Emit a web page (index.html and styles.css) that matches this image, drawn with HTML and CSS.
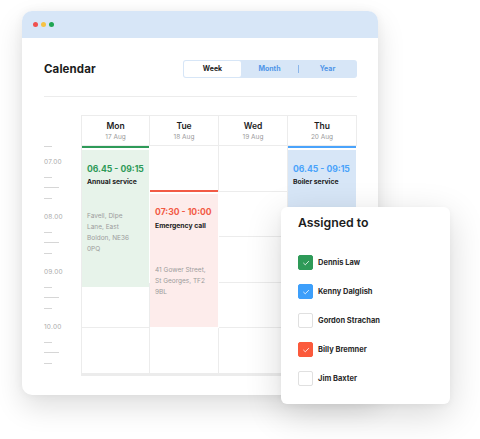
FILE: index.html
```html
<!DOCTYPE html>
<html lang="en">
<head>
    <meta charset="UTF-8">
    <meta name="viewport" content="width=device-width, initial-scale=1.0">
    <title>Calendar</title>
    <link rel="stylesheet" href="styles.css">
</head>
<body>
    <div class="window">
        <div class="titlebar">
            <span class="dot dot-red"></span>
            <span class="dot dot-yellow"></span>
            <span class="dot dot-green"></span>
        </div>
        <div class="content">
            <div class="head">
                <div class="title">Calendar</div>
                <div class="switch">
                    <span class="seg active">Week</span>
                    <span class="seg">Month</span>
                    <span class="sep"></span>
                    <span class="seg">Year</span>
                </div>
            </div>
            <div class="rule"></div>

            <div class="cal">
                <div class="axis">
                    <div class="tick"></div>
                    <div class="hour">
                        <div class="label">07.00</div>
                        <div class="tick"></div>
                        <div class="tick long"></div>
                        <div class="tick"></div>
                    </div>
                    <div class="hour">
                        <div class="label">08.00</div>
                        <div class="tick"></div>
                        <div class="tick long"></div>
                        <div class="tick"></div>
                    </div>
                    <div class="hour">
                        <div class="label">09.00</div>
                        <div class="tick"></div>
                        <div class="tick long"></div>
                        <div class="tick"></div>
                    </div>
                    <div class="hour">
                        <div class="label">10.00</div>
                        <div class="tick"></div>
                        <div class="tick long"></div>
                        <div class="tick"></div>
                    </div>
                </div>

                <div class="week">
                    <div class="day-head"><b>Mon</b><small>17 Aug</small></div>
                    <div class="day-head"><b>Tue</b><small>18 Aug</small></div>
                    <div class="day-head"><b>Wed</b><small>19 Aug</small></div>
                    <div class="day-head"><b>Thu</b><small>20 Aug</small></div>

                    <div class="slot"></div><div class="slot"></div><div class="slot"></div><div class="slot"></div>
                    <div class="slot"></div><div class="slot"></div><div class="slot"></div><div class="slot"></div>
                    <div class="slot"></div><div class="slot"></div><div class="slot"></div><div class="slot"></div>
                    <div class="slot"></div><div class="slot"></div><div class="slot"></div><div class="slot"></div>
                    <div class="slot"></div><div class="slot"></div><div class="slot"></div><div class="slot"></div>

                    <div class="event event-green ev-mon">
                        <div class="event-body">
                            <div class="time">06.45 - 09:15</div>
                            <div class="job">Annual service</div>
                            <div class="addr">Favell, Dipe<br>Lane, East<br>Boldon, NE36<br>0PQ</div>
                        </div>
                    </div>
                    <div class="event event-red ev-tue">
                        <div class="event-body">
                            <div class="time">07:30 - 10:00</div>
                            <div class="job">Emergency call</div>
                            <div class="addr">41 Gower Street,<br>St Georges, TF2<br>9BL</div>
                        </div>
                    </div>
                    <div class="event event-blue ev-thu">
                        <div class="event-body">
                            <div class="time">06.45 - 09:15</div>
                            <div class="job">Boiler service</div>
                        </div>
                    </div>
                </div>
            </div>
        </div>
    </div>

    <div class="assign">
        <div class="assign-title">Assigned to</div>
        <div class="person"><span class="box box-green"><svg viewBox="0 0 10 10"><path d="M2.6 5.2 L4.3 6.8 L7.6 3.4"/></svg></span>Dennis Law</div>
        <div class="person"><span class="box box-blue"><svg viewBox="0 0 10 10"><path d="M2.6 5.2 L4.3 6.8 L7.6 3.4"/></svg></span>Kenny Dalglish</div>
        <div class="person"><span class="box"></span>Gordon Strachan</div>
        <div class="person"><span class="box box-red"><svg viewBox="0 0 10 10"><path d="M2.6 5.2 L4.3 6.8 L7.6 3.4"/></svg></span>Billy Bremner</div>
        <div class="person"><span class="box"></span>Jim Baxter</div>
    </div>
</body>
</html>
```

FILE: styles.css
```css
body, html {
    margin: 0;
    padding: 0;
    height: 100%;
    background: #ffffff;
    font-family: Inter, "Open Sans", sans-serif;
    color: #1c1c1c;
    overflow: hidden;
}
body {
    position: relative;
    padding: 11px 0 0 22px;
    box-sizing: border-box;
}
.window {
    width: 356px;
    height: 384px;
    background: #ffffff;
    border-radius: 10px;
    overflow: hidden;
    box-shadow: 0 12px 28px rgba(0, 0, 0, 0.13), 0 0 10px rgba(0, 0, 0, 0.05);
}
.titlebar {
    height: 27px;
    background: #d7e6f7;
    display: flex;
    align-items: center;
    gap: 3px;
    padding-left: 11px;
}
.dot {
    width: 5px;
    height: 5px;
    border-radius: 50%;
}
.dot-red { background: #f0514f; }
.dot-yellow { background: #f6c244; }
.dot-green { background: #1fa553; }
.content {
    padding: 22px 21px 0 22px;
}
.head {
    display: flex;
    align-items: center;
    justify-content: space-between;
    height: 18px;
}
.title {
    font-size: 11.5px;
    font-weight: 700;
    letter-spacing: 0.1px;
}
.switch {
    display: flex;
    align-items: center;
    width: 174px;
    height: 18px;
    box-sizing: border-box;
    padding: 1px;
    background: #d7e6f7;
    border-radius: 3px;
}
.seg {
    flex: 1;
    text-align: center;
    font-size: 7px;
    font-weight: 700;
    color: #4f95e8;
    line-height: 16px;
}
.seg.active {
    flex: 0 0 57px;
    background: #ffffff;
    border-radius: 2px;
    color: #1c1c1c;
}
.sep {
    width: 1px;
    height: 8px;
    background: #8bb6ea;
}
.rule {
    height: 1px;
    background: #ececec;
    margin: 18px 0 18px;
}
.cal {
    display: flex;
}
.axis {
    width: 38px;
    padding-top: 31px;
}
.tick {
    width: 8px;
    height: 1px;
    background: #d6d6d6;
}
.tick.long {
    width: 15px;
}
.hour {
    margin-top: 13.5px;
}
.axis > .tick + .hour {
    margin-top: 10px;
}
.hour .tick {
    margin-top: 9.5px;
}
.label {
    height: 10px;
    line-height: 10px;
    font-size: 6.5px;
    color: #ababab;
    letter-spacing: 0.2px;
}
.week {
    display: grid;
    grid-template-columns: 68px repeat(3, 69px);
    grid-template-rows: 30px repeat(5, 45.6px);
    border-top: 1px solid #ececec;
    border-left: 1px solid #ececec;
}
.day-head, .slot {
    border-right: 1px solid #ececec;
    border-bottom: 1px solid #ececec;
}
.day-head {
    display: flex;
    flex-direction: column;
    align-items: center;
    padding-top: 5px;
}
.day-head b {
    font-size: 8.5px;
    font-weight: 600;
    line-height: 11px;
}
.day-head small {
    font-size: 6.5px;
    color: #9a9a9a;
    line-height: 11px;
}
.event {
    grid-column: 1;
    grid-row: 2 / 5;
    margin-right: 1px;
    border-top: 2.5px solid;
    z-index: 1;
    display: flex;
    flex-direction: column;
}
.event-body {
    flex: 1;
    margin-top: 2px;
    padding: 13px 0 0 5px;
}
.event-green { border-color: #2e9a58; }
.event-green .event-body { background: #e7f3ea; }
.event-green .time { color: #2e9a58; }
.event-red { border-color: #f25a45; }
.event-red .event-body { background: #fdeceb; }
.event-red .time { color: #f25a45; }
.event-blue { border-color: #4aa3fb; }
.event-blue .event-body { background: #d7e6f7; }
.event-blue .time { color: #4aa3fb; }
.ev-mon {
    margin-bottom: -4px;
}
.ev-tue {
    grid-column: 2;
    grid-row: 3 / 6;
    margin-top: -1.5px;
    margin-bottom: 1px;
}
.ev-tue .event-body {
    padding-top: 12px;
}
.ev-thu {
    grid-column: 4;
    grid-row: 2 / 4;
}
.time {
    font-size: 8.6px;
    font-weight: 700;
    line-height: 12px;
    white-space: nowrap;
}
.job {
    margin-top: 2px;
    font-size: 6.8px;
    font-weight: 700;
    line-height: 10px;
    white-space: nowrap;
}
.addr {
    margin-top: 24px;
    font-size: 6.5px;
    line-height: 11px;
    color: #9c9c9c;
}
.ev-tue .job {
    margin-top: 3px;
}
.ev-tue .addr {
    margin-top: 34px;
}
.assign {
    position: absolute;
    left: 281px;
    top: 207px;
    width: 169px;
    height: 197px;
    box-sizing: border-box;
    padding: 7px 17px 0;
    background: #ffffff;
    border-radius: 6px;
    box-shadow: 0 10px 36px rgba(0, 0, 0, 0.16), 0 2px 6px rgba(0, 0, 0, 0.04);
    z-index: 2;
}
.assign-title {
    font-size: 12.3px;
    font-weight: 600;
    line-height: 18px;
    margin-bottom: 23px;
}
.person {
    display: flex;
    align-items: center;
    gap: 5px;
    height: 15px;
    margin-bottom: 14px;
    font-size: 7.5px;
    font-weight: 700;
    color: #2a2a2a;
}
.box {
    width: 15px;
    height: 15px;
    box-sizing: border-box;
    border: 1.5px solid #e0e0e0;
    border-radius: 2px;
    display: flex;
    align-items: center;
    justify-content: center;
}
.box svg {
    width: 10px;
    height: 10px;
    fill: none;
    stroke: #ffffff;
    stroke-width: 0.8;
    stroke-linecap: round;
    stroke-linejoin: round;
}
.box-green { background: #2e9a58; border-color: #2e9a58; }
.box-blue { background: #3d9ffb; border-color: #3d9ffb; }
.box-red { background: #fb5a3c; border-color: #fb5a3c; }
```
